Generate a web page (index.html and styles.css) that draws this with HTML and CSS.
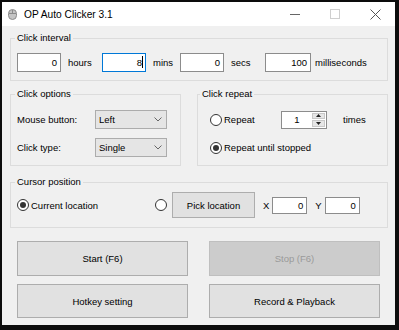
FILE: index.html
```html
<!DOCTYPE html>
<html>
  <head>
    <title>OP Auto Clicker 3.1</title>
    <link rel="stylesheet" href="styles.css">
  </head>
  <body>
    <div class="window">
      <div class="titlebar">
        <svg class="app-icon" width="9" height="11" viewBox="0 0 9 11">
          <rect x="0.5" y="0.5" width="8" height="10" rx="4" fill="#c4c4c4" stroke="#8a8a8a"/>
          <line x1="4.5" y1="1" x2="4.5" y2="4.5" stroke="#8a8a8a"/>
          <line x1="1" y1="4.5" x2="8" y2="4.5" stroke="#8a8a8a"/>
        </svg>
        <span class="title">OP Auto Clicker 3.1</span>
        <div class="controls">
          <span class="ctl">
            <svg width="10" height="10" viewBox="0 0 10 10"><line x1="0" y1="5.5" x2="10" y2="5.5" stroke="#666"/></svg>
          </span>
          <span class="ctl">
            <svg width="10" height="10" viewBox="0 0 10 10"><rect x="0.5" y="0.5" width="9" height="9" fill="none" stroke="#cfcfcf"/></svg>
          </span>
          <span class="ctl">
            <svg width="11" height="11" viewBox="0 0 11 11"><path d="M0.5 0.5 L10.5 10.5 M10.5 0.5 L0.5 10.5" stroke="#555" fill="none"/></svg>
          </span>
        </div>
      </div>

      <div class="content">
        <fieldset class="group interval">
          <legend>Click interval</legend>
          <div class="interval-row">
            <div class="field"><div class="textbox">0</div><span>hours</span></div>
            <div class="field"><div class="textbox focused">8<i class="caret"></i></div><span>mins</span></div>
            <div class="field"><div class="textbox">0</div><span>secs</span></div>
            <div class="field ms"><div class="textbox wide">100</div><span>milliseconds</span></div>
          </div>
        </fieldset>

        <div class="middle">
          <fieldset class="group options">
            <legend>Click options</legend>
            <div class="opt-row">
              <span class="opt-label">Mouse button:</span>
              <div class="select">Left
                <svg width="8" height="5" viewBox="0 0 8 5"><polyline points="0.5,0.5 4,4 7.5,0.5" fill="none" stroke="#666"/></svg>
              </div>
            </div>
            <div class="opt-row">
              <span class="opt-label">Click type:</span>
              <div class="select">Single
                <svg width="8" height="5" viewBox="0 0 8 5"><polyline points="0.5,0.5 4,4 7.5,0.5" fill="none" stroke="#666"/></svg>
              </div>
            </div>
          </fieldset>

          <fieldset class="group repeat">
            <legend>Click repeat</legend>
            <div class="opt-row">
              <label class="radio-wrap repeat-label"><span class="radio"></span>Repeat</label>
              <div class="spin">
                <span class="spin-value">1</span>
                <div class="spin-btns">
                  <span class="spin-btn"><svg width="5" height="3" viewBox="0 0 5 3"><polygon points="0,3 5,3 2.5,0" fill="#222"/></svg></span>
                  <span class="spin-btn"><svg width="5" height="3" viewBox="0 0 5 3"><polygon points="0,0 5,0 2.5,3" fill="#222"/></svg></span>
                </div>
              </div>
              <span class="times">times</span>
            </div>
            <div class="opt-row">
              <label class="radio-wrap"><span class="radio checked"></span>Repeat until stopped</label>
            </div>
          </fieldset>
        </div>

        <fieldset class="group cursor">
          <legend>Cursor position</legend>
          <div class="cursor-row">
            <label class="radio-wrap current"><span class="radio checked"></span>Current location</label>
            <span class="radio"></span>
            <div class="button pick">Pick location</div>
            <span class="axis">X</span>
            <div class="textbox small">0</div>
            <span class="axis">Y</span>
            <div class="textbox small">0</div>
          </div>
        </fieldset>

        <div class="actions">
          <div class="button big">Start (F6)</div>
          <div class="button big disabled">Stop (F6)</div>
          <div class="button big low">Hotkey setting</div>
          <div class="button big low">Record &amp; Playback</div>
        </div>
      </div>
    </div>
  </body>
</html>
```

FILE: styles.css
```css
html,
body {
  margin: 0;
  height: 330px;
  overflow: hidden;
}

body {
  background-color: #0c0c0c;
  font-family: "Liberation Sans", Arial, sans-serif;
  font-size: 9.5px;
  color: #000;
}

.window {
  margin: 2px 0 0 2px;
  width: 393px;
  height: 323px;
  background-color: #f0f0f0;
}

/* title bar */
.titlebar {
  height: 24px;
  background-color: #fff;
  display: flex;
  align-items: center;
  padding-left: 6px;
}

.app-icon {
  margin-right: 7px;
}

.title {
  font-size: 10.2px;
  color: #000;
}

.controls {
  margin-left: auto;
  display: flex;
}

.ctl {
  width: 40px;
  height: 24px;
  display: flex;
  align-items: center;
  justify-content: center;
}

/* content */
.content {
  padding: 6px 7px 0 8px;
}

.group {
  margin: 0;
  border: 1px solid #dcdcdc;
  padding: 0 6px;
  min-width: 0;
}

.group legend {
  padding: 0 2px;
  margin-left: -2px;
  line-height: 12px;
}

.interval {
  padding-top: 9px;
  padding-bottom: 8px;
}

.interval-row {
  display: grid;
  grid-template-columns: 85px 78px 85px 1fr;
}

.field {
  display: flex;
  align-items: center;
  gap: 7px;
}

.field.ms {
  gap: 4px;
}

.textbox {
  box-sizing: border-box;
  width: 44px;
  height: 19px;
  border: 1px solid #8c8c8c;
  background-color: #fff;
  text-align: right;
  padding-right: 3px;
  line-height: 17px;
}

.textbox.wide {
  width: 46px;
}

.textbox.focused {
  border-color: #0078d7;
  padding-right: 2px;
}

.caret {
  display: inline-block;
  width: 1px;
  height: 12px;
  background-color: #000;
  vertical-align: -2px;
}

.textbox.small {
  width: 35px;
  height: 17px;
  line-height: 15px;
}

/* middle groups */
.middle {
  display: flex;
  gap: 16px;
  margin-top: 7px;
}

.options {
  width: 171px;
  box-sizing: border-box;
  padding-top: 10px;
  padding-bottom: 8px;
}

.repeat {
  flex: 1;
  padding: 10px 4px 8px 4px;
}

.opt-row {
  display: flex;
  align-items: center;
  height: 19px;
}

.opt-row + .opt-row {
  margin-top: 9px;
}

.opt-label {
  width: 78px;
}

.select {
  box-sizing: border-box;
  width: 72px;
  height: 19px;
  background-color: #e5e5e5;
  border: 1px solid #acacac;
  padding-left: 3px;
  display: flex;
  align-items: center;
  justify-content: space-between;
  padding-right: 4px;
}

.radio-wrap {
  display: flex;
  align-items: center;
  gap: 2px;
}

.repeat .radio-wrap {
  margin-left: 8px;
}

.repeat-label {
  width: 71px;
}

.radio {
  box-sizing: border-box;
  width: 12px;
  height: 12px;
  border: 1px solid #333;
  border-radius: 50%;
  background-color: #fff;
  display: flex;
  align-items: center;
  justify-content: center;
}

.radio.checked::after {
  content: "";
  width: 6px;
  height: 6px;
  border-radius: 50%;
  background-color: #333;
}

.spin {
  box-sizing: border-box;
  width: 46px;
  height: 18px;
  border: 1px solid #8c8c8c;
  background-color: #fff;
  display: flex;
}

.spin-value {
  flex: 1;
  text-align: center;
  line-height: 16px;
}

.spin-btns {
  width: 13px;
  display: flex;
  flex-direction: column;
  gap: 1px;
  padding: 1px 1px 1px 0;
}

.spin-btn {
  flex: 1;
  background-color: #e6e6e6;
  border: 1px solid #c8c8c8;
  display: flex;
  align-items: center;
  justify-content: center;
}

.times {
  margin-left: 16px;
}

/* cursor position */
.cursor {
  margin-top: 10px;
  padding-top: 4px;
  padding-bottom: 9px;
}

.cursor-row {
  display: flex;
  align-items: center;
}

.current {
  width: 138px;
}

.button {
  box-sizing: border-box;
  background-color: #e1e1e1;
  border: 1px solid #adadad;
  display: flex;
  align-items: center;
  justify-content: center;
}

.pick {
  width: 83px;
  height: 26px;
  margin-left: 5px;
}

.axis {
  margin-left: 8px;
  margin-right: 2px;
}

.axis + .textbox {
  margin-left: 1px;
}

/* bottom buttons */
.actions {
  display: grid;
  grid-template-columns: 171px 171px;
  column-gap: 21px;
  row-gap: 8px;
  margin: 13px 0 0 7px;
}

.button.big {
  height: 35px;
}

.button.big.low {
  height: 34px;
}

.button.disabled {
  background-color: #cccccc;
  border-color: #bfbfbf;
  color: #9a9a9a;
}
```
